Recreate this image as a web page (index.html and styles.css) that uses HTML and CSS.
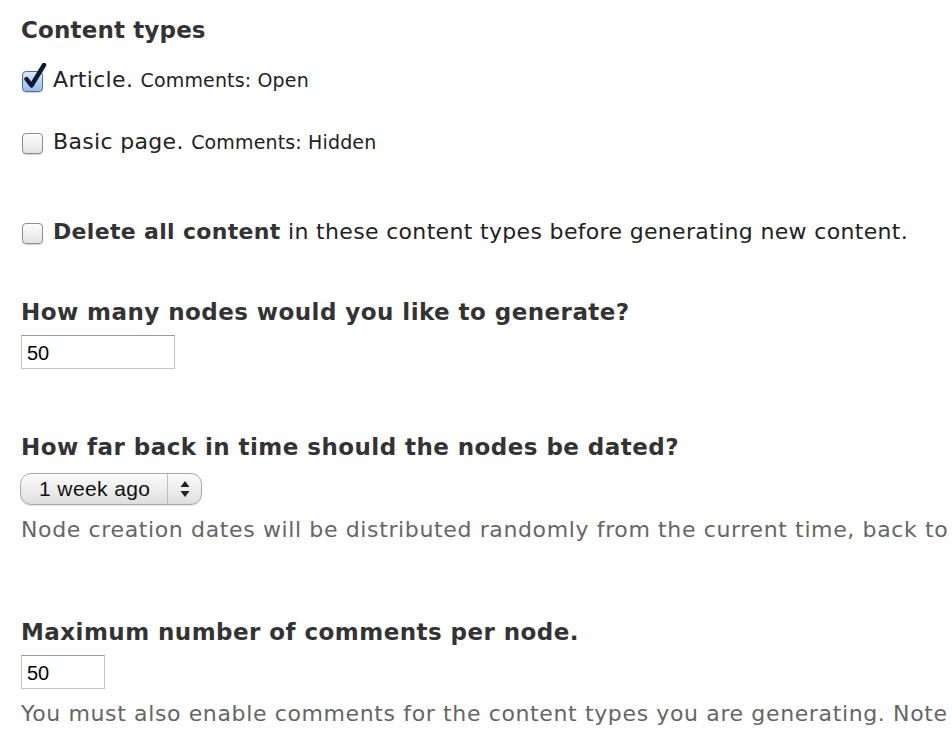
FILE: index.html
```html
<!DOCTYPE html>
<html>
<head>
<meta charset="utf-8">
<link rel="stylesheet" href="styles.css">
</head>
<body>
<form class="form">
  <h2 class="title title-first">Content types</h2>
  <div class="check-row row-article">
    <span class="box box-checked">
      <svg class="tick" viewBox="0 0 24 28" width="24" height="28"><path d="M3.5 16 L8.5 22.5 L21 2" fill="none" stroke="#0a1a30" stroke-width="4.4" stroke-linecap="round" stroke-linejoin="round"/></svg>
    </span>
    <span class="label">Article. <span class="small">Comments: Open</span></span>
  </div>
  <div class="check-row row-basic">
    <span class="box"></span>
    <span class="label">Basic page. <span class="small">Comments: Hidden</span></span>
  </div>
  <div class="check-row row-delete">
    <span class="box"></span>
    <span class="label"><strong>Delete all content</strong> in these content types before generating new content.</span>
  </div>

  <h2 class="title title-nodes">How many nodes would you like to generate?</h2>
  <div class="text-input input-wide">50</div>

  <h2 class="title title-time">How far back in time should the nodes be dated?</h2>
  <div class="select">
    <span class="select-value">1 week ago</span>
    <span class="select-arrows">
      <svg viewBox="0 0 10 18" width="10" height="18"><path d="M5 1 L9.5 7 L0.5 7 Z" fill="#222"/><path d="M5 17 L9.5 11 L0.5 11 Z" fill="#222"/></svg>
    </span>
  </div>
  <p class="desc desc-time">Node creation dates will be distributed randomly from the current time, back to the selected time.</p>

  <h2 class="title title-comments">Maximum number of comments per node.</h2>
  <div class="text-input input-narrow">50</div>
  <p class="desc desc-comments">You must also enable comments for the content types you are generating. Note that some nodes will randomly not have comments.</p>
</form>
</body>
</html>
```

FILE: styles.css
```css
html, body {
  margin: 0;
  padding: 0;
  background: #fff;
  overflow: hidden;
}
body {
  width: 952px;
  height: 740px;
  font-family: "DejaVu Sans", "Noto Sans", sans-serif;
  color: #333;
}
.form {
  box-sizing: border-box;
  width: 952px;
  height: 740px;
  overflow: hidden;
  padding-left: 21px;
  display: flex;
  flex-direction: column;
  align-items: flex-start;
  white-space: nowrap;
}
.title {
  margin: 0;
  font-size: 23px;
  font-weight: bold;
  line-height: 30px;
  letter-spacing: 0.45px;
  color: #333;
}
.title-first { margin-top: 15px; letter-spacing: 0.15px; }
.title-nodes { margin-top: 50px; }
.title-time { margin-top: 63px; }
.title-comments { margin-top: 72px; }

.check-row {
  display: flex;
  align-items: center;
  height: 30px;
  gap: 10px;
  flex: none;
}
.row-article { margin-top: 20px; }
.row-basic { margin-top: 32px; }
.row-delete { margin-top: 60px; }

.box {
  position: relative;
  box-sizing: border-box;
  width: 21px;
  height: 21px;
  margin-left: 1px;
  margin-top: 3px;
  border: 1px solid #8e8e8e;
  border-radius: 4px;
  background: linear-gradient(#fdfdfd, #e4e4e4);
  box-shadow: 0 1px 1px rgba(0,0,0,0.18);
  flex: none;
}
.box-checked {
  border-color: #5a6f8c;
  background: linear-gradient(#d9e9fb, #94bdf0);
}
.tick {
  position: absolute;
  left: 0px;
  top: -9px;
}
.label {
  font-size: 22px;
  line-height: 30px;
  letter-spacing: 0.33px;
  color: #222;
}
.label strong { color: #333; }
.small {
  font-size: 19px;
  letter-spacing: 0.15px;
}

.text-input {
  box-sizing: border-box;
  flex: none;
  height: 34px;
  margin-top: 8px;
  border: 1px solid #c4c4c4;
  border-top-color: #9a9a9a;
  padding: 4px 5px 0;
  font-family: "Liberation Sans", Arial, sans-serif;
  font-size: 20px;
  line-height: 26px;
  color: #000;
}
.input-wide { width: 154px; }
.input-narrow { width: 84px; }

.select {
  box-sizing: border-box;
  flex: none;
  display: flex;
  width: 182px;
  height: 32px;
  margin-top: 11px;
  margin-left: -1px;
  border: 1px solid #a9a9a9;
  border-radius: 11px;
  background: linear-gradient(#fbfbfb 0%, #eeeeee 50%, #dedede 100%);
  box-shadow: 0 1px 1px rgba(0,0,0,0.12);
}
.select-value {
  flex: 1;
  padding-left: 18px;
  font-family: "Liberation Sans", Arial, sans-serif;
  font-size: 21px;
  letter-spacing: 0.4px;
  line-height: 30px;
  color: #111;
  border-right: 1px solid #bcbcbc;
}
.select-arrows {
  width: 33px;
  display: flex;
  align-items: center;
  justify-content: center;
}

.desc {
  margin: 10px 0 0;
  flex: none;
  font-size: 22px;
  line-height: 30px;
  letter-spacing: 0.63px;
  color: #666;
}
```
